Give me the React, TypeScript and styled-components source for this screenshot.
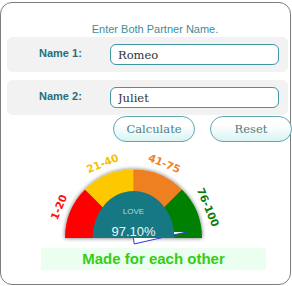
import styled, { createGlobalStyle } from "styled-components";

const GlobalStyle = createGlobalStyle`
  body {
    margin: 0;
    overflow: hidden;
    font-family: "Liberation Sans", Arial, sans-serif;
    background: #fff;
  }
`;

const segments = [
  { from: 180, to: 135, color: "#ff0000", label: "1-20", labelColor: "#ff1010" },
  { from: 135, to: 90, color: "#fdc800", label: "21-40", labelColor: "#f2c200" },
  { from: 90, to: 45, color: "#ee8022", label: "41-75", labelColor: "#ef8424" },
  { from: 45, to: 0, color: "#008000", label: "76-100", labelColor: "#0b7a0b" },
];

const CX = 103.5;
const CY = 87;
const R = 68.5;
const LABEL_R = 80;

function pt(angle: number, r: number) {
  const a = (angle * Math.PI) / 180;
  return [CX + r * Math.cos(a), CY - r * Math.sin(a)];
}

function Gauge({ value }: { value: number }) {
  const needleAngle = 180 - (value / 100) * 180 + 1.5;
  const tip = pt(needleAngle, 56);
  const b1 = pt(needleAngle + 90, 6);
  const b2 = pt(needleAngle - 90, 6);
  return (
    <GaugeSvg width={200} height={92} viewBox="0 0 200 92">
      <defs>
        <filter id="arcShadow" x="-20%" y="-20%" width="140%" height="140%">
          <feDropShadow dx="0" dy="0" stdDeviation="2.3" floodColor="#000" floodOpacity="0.6" />
        </filter>
      </defs>
      <g filter="url(#arcShadow)">
        {segments.map((s) => {
          const [x0, y0] = pt(s.from, R);
          const [x1, y1] = pt(s.to, R);
          return (
            <path
              key={s.label}
              d={`M${CX} ${CY} L${x0} ${y0} A${R} ${R} 0 0 1 ${x1} ${y1} Z`}
              fill={s.color}
            />
          );
        })}
      </g>
      {segments.map((s) => {
        const mid = (s.from + s.to) / 2;
        const [x, y] = pt(mid, LABEL_R);
        return (
          <GaugeLabel
            key={s.label}
            x={x}
            y={y}
            fill={s.labelColor}
            transform={`rotate(${90 - mid} ${x} ${y})`}
          >
            {s.label}
          </GaugeLabel>
        );
      })}
      <polygon
        points={`${b1[0]},${b1[1]} ${tip[0]},${tip[1]} ${b2[0]},${b2[1]}`}
        fill="#fff"
        stroke="#2a3ad8"
        strokeWidth="1"
      />
      <path d={`M${CX - 41} ${CY} A41 47 0 0 1 ${CX + 41} ${CY} Z`} fill="#167882" />
      <LoveText x={CX} y={63}>LOVE</LoveText>
      <ValueText x={CX} y={84.5}>{value.toFixed(2)}%</ValueText>
    </GaugeSvg>
  );
}

function App() {
  return (
    <>
      <GlobalStyle />
      <Card>
        <Heading>Enter Both Partner Name.</Heading>
        <NameRow>
          <NameLabel>Name 1:</NameLabel>
          <NameInput defaultValue="Romeo" />
        </NameRow>
        <NameRow $gap={8}>
          <NameLabel>Name 2:</NameLabel>
          <NameInput defaultValue="Juliet" />
        </NameRow>
        <ButtonRow>
          <PillButton>Calculate</PillButton>
          <PillButton>Reset</PillButton>
        </ButtonRow>
        <Gauge value={97.1} />
        <Result>Made for each other</Result>
      </Card>
    </>
  );
}

export default App;

const Card = styled.div`
  box-sizing: border-box;
  width: 291px;
  height: 283px;
  margin-top: 2px;
  border: 1px solid #7d7d7d;
  border-radius: 12px;
  overflow: visible;
`;

const Heading = styled.div`
  margin-top: 20px;
  padding-left: 19px;
  text-align: center;
  font-size: 11px;
  line-height: 13px;
  color: #3d8e98;
`;

const NameRow = styled.div<{ $gap?: number }>`
  box-sizing: border-box;
  display: flex;
  align-items: flex-start;
  height: 35px;
  margin: ${(p) => p.$gap ?? 1}px 2px 0 6px;
  padding-top: 7px;
  background: #f2f2f2;
  border-radius: 6px;
`;

const NameLabel = styled.label`
  box-sizing: border-box;
  width: 103px;
  padding-left: 32px;
  margin-top: 3px;
  font-size: 11px;
  line-height: 13px;
  font-weight: bold;
  color: #1e6f7d;
`;

const NameInput = styled.input`
  box-sizing: border-box;
  width: 169px;
  height: 21px;
  padding: 0 7px;
  border: 1.5px solid #3f989f;
  border-radius: 6px;
  background: #fff;
  font-family: "DejaVu Serif", serif;
  font-size: 11.5px;
  color: #333;
  outline: none;
`;

const ButtonRow = styled.div`
  display: flex;
  gap: 15px;
  padding-left: 112px;
  margin-top: 1px;
`;

const PillButton = styled.button`
  flex-shrink: 0;
  box-sizing: border-box;
  width: 82px;
  height: 26px;
  padding: 0;
  border: 1px solid #5ea9ae;
  border-radius: 13px;
  background: linear-gradient(#ffffff 35%, #d8f3f3);
  font-family: "DejaVu Serif", serif;
  font-size: 11.5px;
  color: #4d7f83;
`;

const GaugeSvg = styled.svg`
  display: block;
  margin: 9px 0 0 29px;
  overflow: visible;
`;

const GaugeLabel = styled.text`
  font-family: "DejaVu Sans", sans-serif;
  font-size: 10.5px;
  font-weight: bold;
  text-anchor: middle;
  dominant-baseline: middle;
`;

const LoveText = styled.text`
  font-family: "Liberation Sans", Arial, sans-serif;
  font-size: 8px;
  fill: #b9d9dd;
  text-anchor: middle;
`;

const ValueText = styled.text`
  font-family: "Liberation Sans", Arial, sans-serif;
  font-size: 13px;
  fill: #eef6f7;
  text-anchor: middle;
`;

const Result = styled.div`
  width: 225px;
  height: 22px;
  margin: 5px 0 0 40px;
  background: #eaffef;
  text-align: center;
  line-height: 22px;
  font-size: 15px;
  font-weight: bold;
  color: #37cc13;
`;
